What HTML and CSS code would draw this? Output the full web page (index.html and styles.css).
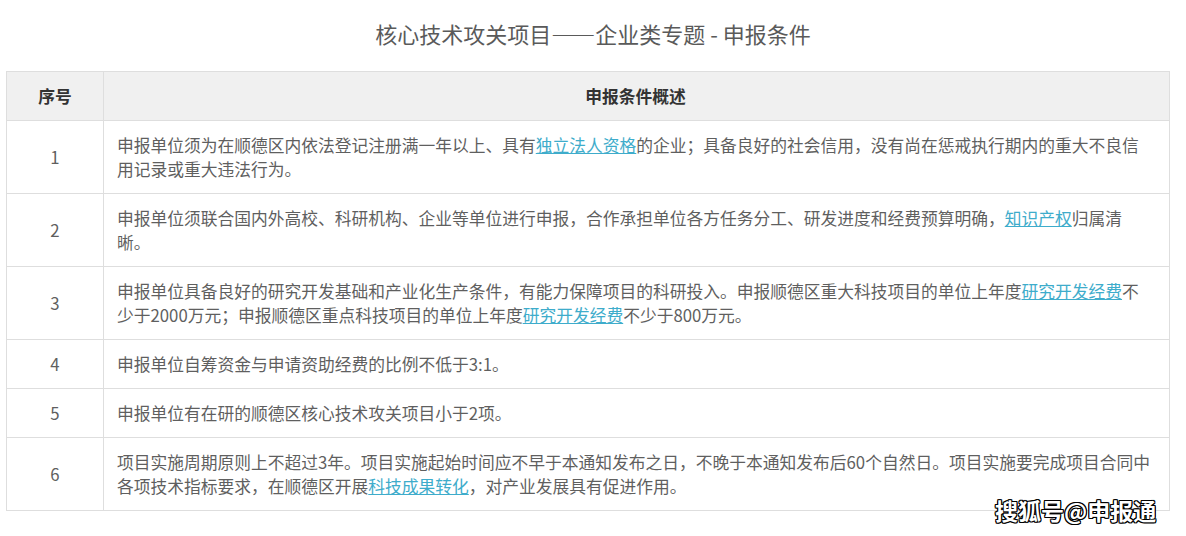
FILE: index.html
```html
<!DOCTYPE html>
<html lang="zh">
<head>
<meta charset="utf-8">
<link rel="stylesheet" href="styles.css">
</head>
<body>
<div class="page">
  <h1 class="title">核心技术攻关项目——企业类专题 - 申报条件</h1>
  <table class="grid">
    <colgroup><col class="c-num"><col class="c-text"></colgroup>
    <thead>
      <tr><th>序号</th><th>申报条件概述</th></tr>
    </thead>
    <tbody>
      <tr><td class="num">1</td><td>申报单位须为在顺德区内依法登记注册满一年以上、具有<a class="lnk">独立法人资格</a>的企业；具备良好的社会信用，没有尚在惩戒执行期内的重大不良信用记录或重大违法行为。</td></tr>
      <tr><td class="num">2</td><td>申报单位须联合国内外高校、科研机构、企业等单位进行申报，合作承担单位各方任务分工、研发进度和经费预算明确，<a class="lnk">知识产权</a>归属清晰。</td></tr>
      <tr><td class="num">3</td><td>申报单位具备良好的研究开发基础和产业化生产条件，有能力保障项目的科研投入。申报顺德区重大科技项目的单位上年度<a class="lnk">研究开发经费</a>不少于2000万元；申报顺德区重点科技项目的单位上年度<a class="lnk">研究开发经费</a>不少于800万元。</td></tr>
      <tr><td class="num">4</td><td>申报单位自筹资金与申请资助经费的比例不低于3:1。</td></tr>
      <tr><td class="num">5</td><td>申报单位有在研的顺德区核心技术攻关项目小于2项。</td></tr>
      <tr><td class="num">6</td><td>项目实施周期原则上不超过3年。项目实施起始时间应不早于本通知发布之日，不晚于本通知发布后60个自然日。项目实施要完成项目合同中各项技术指标要求，在顺德区开展<a class="lnk">科技成果转化</a>，对产业发展具有促进作用。</td></tr>
    </tbody>
  </table>
  <div class="mark">搜狐号@申报通</div>
</div>
</body>
</html>
```
FILE: styles.css
```css
html, body {
  margin: 0;
  padding: 0;
  background: #fff;
}
.page {
  position: relative;
  width: 1186px;
  height: 536px;
  overflow: hidden;
  font-family: "Noto Sans CJK SC", "Noto Sans", sans-serif;
}
.title {
  margin: 0;
  height: 71px;
  line-height: 66px;
  text-align: center;
  font-size: 22px;
  font-weight: 400;
  color: #5a5a5a;
}
.grid {
  margin-left: 6px;
  width: 1164px;
  border-collapse: collapse;
  table-layout: fixed;
  font-size: 16.75px;
  line-height: 24px;
  color: #5f5f5f;
}
.c-num { width: 97px; }
.grid th, .grid td {
  border: 1px solid #dedede;
  padding: 12px 15px 12px 13px;
  vertical-align: middle;
}
.grid th {
  background: #f0f0f0;
  color: #333;
  font-weight: 700;
  text-align: center;
}
.grid td { text-align: left; }
.grid th:first-child,
.grid td.num {
  text-align: center;
  padding: 12px 0;
}
.lnk {
  color: #3eaccb;
  text-decoration: underline;
}
.mark {
  position: absolute;
  left: 995px;
  top: 495px;
  font-size: 23px;
  font-weight: 700;
  line-height: 30px;
  color: #fff;
  text-shadow: 1px 1px 0 #000, -1px -1px 0 #000, 1px -1px 0 #000, -1px 1px 0 #000, 0 1px 0 #000, 1px 0 0 #000, 0 -1px 0 #000, -1px 0 0 #000;
}
```
